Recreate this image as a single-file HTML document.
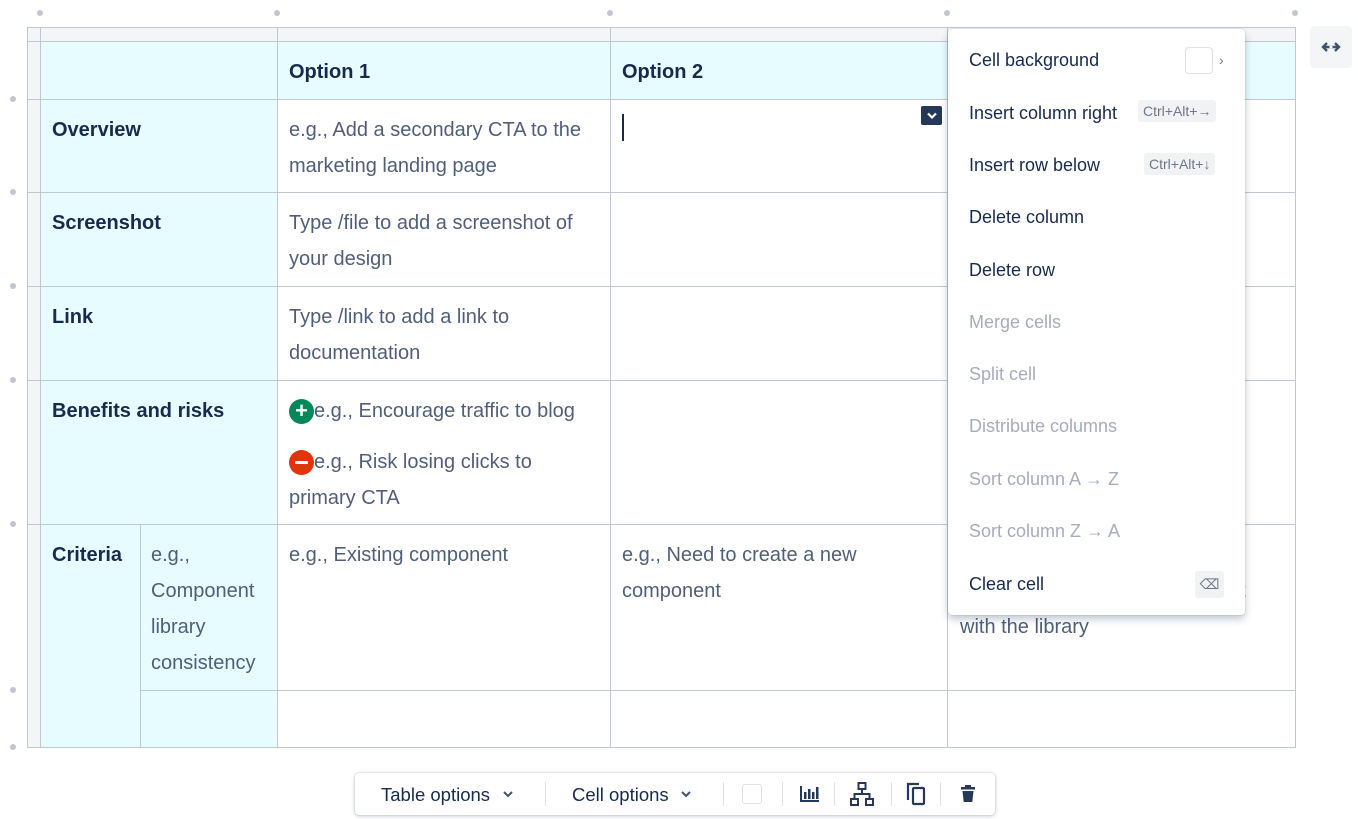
<!DOCTYPE html>
<html><head><meta charset="utf-8"><style>
*{margin:0;padding:0;box-sizing:border-box}
body{width:1358px;height:819px;background:#fff;position:relative;overflow:hidden;font-family:"Segoe UI","Liberation Sans",sans-serif;}
.a{position:absolute}
.dot{position:absolute;width:6px;height:6px;border-radius:50%;background:#c1c7d0}
.hl{position:absolute;height:1px;background:#c1c7d0}
.vl{position:absolute;width:1px;background:#c1c7d0}
.t{position:absolute;font-size:20px;line-height:36px;color:#505f79}
.b{position:absolute;font-size:20px;line-height:36px;color:#172b4d;font-weight:bold}
.mi{position:absolute;left:969px;font-size:18px;color:#172b4d}
.mi.d{color:#a5adba}
.kb{position:absolute;background:#f1f2f4;border-radius:3px;font-size:14px;color:#6b778c;padding:3px 5px}
</style></head><body>
<div class="dot" style="left:37px;top:10px"></div>
<div class="dot" style="left:274px;top:10px"></div>
<div class="dot" style="left:607px;top:10px"></div>
<div class="dot" style="left:944px;top:10px"></div>
<div class="dot" style="left:1292px;top:10px"></div>
<div class="dot" style="left:10px;top:96px"></div>
<div class="dot" style="left:10px;top:189px"></div>
<div class="dot" style="left:10px;top:283px"></div>
<div class="dot" style="left:10px;top:377px"></div>
<div class="dot" style="left:10px;top:521px"></div>
<div class="dot" style="left:10px;top:687px"></div>
<div class="dot" style="left:10px;top:744px"></div>

<div class="a" style="left:27px;top:27px;width:1269px;height:14px;background:#f4f5f7;border-radius:3px 3px 0 0"></div>
<div class="a" style="left:27px;top:27px;width:13px;height:720px;background:#f4f5f7"></div>
<div class="a" style="left:40px;top:41px;width:1256px;height:58px;background:#e6fcff"></div>
<div class="a" style="left:40px;top:99px;width:238px;height:648px;background:#e6fcff"></div>

<div class="hl" style="left:27px;top:27px;width:1269px"></div>
<div class="hl" style="left:27px;top:41px;width:1269px"></div>
<div class="hl" style="left:27px;top:99px;width:1269px"></div>
<div class="hl" style="left:27px;top:192px;width:1269px"></div>
<div class="hl" style="left:27px;top:286px;width:1269px"></div>
<div class="hl" style="left:27px;top:380px;width:1269px"></div>
<div class="hl" style="left:27px;top:524px;width:1269px"></div>
<div class="hl" style="left:140px;top:690px;width:1156px"></div>
<div class="hl" style="left:27px;top:747px;width:1269px"></div>
<div class="vl" style="left:27px;top:27px;height:721px"></div>
<div class="vl" style="left:40px;top:27px;height:721px"></div>
<div class="vl" style="left:140px;top:524px;height:224px"></div>
<div class="vl" style="left:277px;top:27px;height:721px"></div>
<div class="vl" style="left:610px;top:27px;height:721px"></div>
<div class="vl" style="left:947px;top:27px;height:721px"></div>
<div class="vl" style="left:1295px;top:27px;height:721px"></div>

<div class="b" style="left:289px;top:54px">Option 1</div>
<div class="b" style="left:622px;top:54px">Option 2</div>
<div class="b" style="left:52px;top:112px">Overview</div>
<div class="b" style="left:52px;top:205px">Screenshot</div>
<div class="b" style="left:52px;top:299px">Link</div>
<div class="b" style="left:52px;top:393px">Benefits and risks</div>
<div class="b" style="left:52px;top:537px">Criteria</div>
<div class="t" style="left:289px;top:112px">e.g., Add a secondary CTA to the<br>marketing landing page</div>
<div class="t" style="left:289px;top:205px">Type /file to add a screenshot of<br>your design</div>
<div class="t" style="left:289px;top:299px">Type /link to add a link to<br>documentation</div>
<div class="t" style="left:314px;top:393px">e.g., Encourage traffic to blog</div>
<div class="t" style="left:289px;top:444px;text-indent:25px;width:300px">e.g., Risk losing clicks to primary CTA</div>
<div class="a" style="left:289px;top:399px;width:25px;height:25px;border-radius:50%;background:#00875a;color:#fff;font-weight:bold;font-size:22px;line-height:24px;text-align:center">+</div>
<div class="a" style="left:289px;top:450px;width:25px;height:25px;border-radius:50%;background:#de350b"><div class="a" style="left:6px;top:11px;width:13px;height:3px;background:#fff;border-radius:1px"></div></div>
<div class="t" style="left:151px;top:537px">e.g.,<br>Component<br>library<br>consistency</div>
<div class="t" style="left:289px;top:537px">e.g., Existing component</div>
<div class="t" style="left:622px;top:537px">e.g., Need to create a new<br>component</div>
<div class="t" style="left:1240px;top:573px">t</div>
<div class="t" style="left:960px;top:609px">with the library</div>
<div class="a" style="left:622px;top:114px;width:2px;height:27px;background:#172b4d"></div>
<div class="a" style="left:921px;top:106px;width:21px;height:19px;background:#253858;border-radius:2px">
<svg width="12" height="8" viewBox="0 0 12 8" style="margin-top:6px;display:block;margin-left:4.5px"><path d="M2 1.5 L6 5.5 L10 1.5" stroke="#fff" stroke-width="2.2" fill="none"/></svg></div>

<div class="a" style="left:1310px;top:26px;width:42px;height:42px;background:#f4f5f7;border-radius:4px">
<svg width="42" height="42"><path d="M13 21 H29 M17 17 L13 21 L17 25 M25 17 L29 21 L25 25" stroke="#42526e" stroke-width="2.4" fill="none"/><rect x="19.5" y="19.8" width="3" height="2.4" fill="#f4f5f7"/></svg></div>

<div class="a" style="left:948px;top:29px;width:297px;height:586px;background:#fff;border-radius:4px;box-shadow:0 4px 8px rgba(9,30,66,.25),0 0 1px rgba(9,30,66,.31)"></div>
<div class="mi" style="top:50px">Cell background</div>
<div class="a" style="left:1185px;top:47px;width:28px;height:27px;border:1px solid #dfe1e6;border-radius:4px"></div>
<div class="a" style="left:1219px;top:52px;font-size:14px;color:#6b778c">›</div>
<div class="mi" style="top:103px">Insert column right</div>
<div class="kb" style="left:1138px;top:100px">Ctrl+Alt+→</div>
<div class="mi" style="top:155px">Insert row below</div>
<div class="kb" style="left:1144px;top:153px">Ctrl+Alt+↓</div>
<div class="mi" style="top:207px">Delete column</div>
<div class="mi" style="top:260px">Delete row</div>
<div class="mi d" style="top:312px">Merge cells</div>
<div class="mi d" style="top:364px">Split cell</div>
<div class="mi d" style="top:416px">Distribute columns</div>
<div class="mi d" style="top:469px">Sort column A → Z</div>
<div class="mi d" style="top:521px">Sort column Z → A</div>
<div class="mi" style="top:574px">Clear cell</div>
<div class="a" style="left:1195px;top:571px;width:29px;height:27px;background:#f1f2f4;border-radius:3px;text-align:center;line-height:27px;color:#6b778c;font-size:14px">⌫</div>

<div class="a" style="left:355px;top:773px;width:640px;height:42px;background:#fff;border-radius:4px;box-shadow:0 1px 4px rgba(9,30,66,.25),0 0 1px rgba(9,30,66,.3)"></div>
<div class="a" style="left:381px;top:784px;font-size:18.5px;color:#172b4d">Table options</div>
<svg class="a" style="left:502px;top:790px" width="12" height="8"><path d="M2 2 L6 6 L10 2" stroke="#42526e" stroke-width="2" fill="none"/></svg>
<div class="a" style="left:545px;top:782px;width:1px;height:24px;background:#dfe1e6"></div>
<div class="a" style="left:572px;top:784px;font-size:18.5px;color:#172b4d">Cell options</div>
<svg class="a" style="left:680px;top:790px" width="12" height="8"><path d="M2 2 L6 6 L10 2" stroke="#42526e" stroke-width="2" fill="none"/></svg>
<div class="a" style="left:723px;top:782px;width:1px;height:24px;background:#dfe1e6"></div>
<div class="a" style="left:742px;top:784px;width:20px;height:20px;border:1px solid #dfe1e6;border-radius:3px"></div>
<div class="a" style="left:782px;top:782px;width:1px;height:24px;background:#dfe1e6"></div>
<svg class="a" style="left:799px;top:784px" width="22" height="20"><path d="M2 2 V17 H20" stroke="#253858" stroke-width="2" fill="none"/><rect x="5" y="8" width="2.5" height="7" fill="#253858"/><rect x="9" y="5" width="2.5" height="10" fill="#253858"/><rect x="13" y="8" width="2.5" height="7" fill="#253858"/><rect x="17" y="3" width="2.5" height="12" fill="#253858"/></svg>
<div class="a" style="left:834px;top:782px;width:1px;height:24px;background:#dfe1e6"></div>
<svg class="a" style="left:849px;top:781px" width="26" height="26"><rect x="9.5" y="2" width="7" height="6" stroke="#253858" stroke-width="2" fill="none"/><rect x="2" y="18" width="7" height="6" stroke="#253858" stroke-width="2" fill="none"/><rect x="17" y="18" width="7" height="6" stroke="#253858" stroke-width="2" fill="none"/><path d="M13 8 V13 M5.5 18 V13 H20.5 V18" stroke="#253858" stroke-width="2" fill="none"/></svg>
<div class="a" style="left:891px;top:782px;width:1px;height:24px;background:#dfe1e6"></div>
<svg class="a" style="left:905px;top:781px" width="24" height="26"><path d="M3 19 V3 H14" stroke="#253858" stroke-width="2.2" fill="none"/><rect x="8" y="7" width="11" height="16" rx="1" stroke="#253858" stroke-width="2.2" fill="none"/></svg>
<div class="a" style="left:940px;top:782px;width:1px;height:24px;background:#dfe1e6"></div>
<svg class="a" style="left:959px;top:784px" width="18" height="20"><rect x="2" y="3" width="14" height="2.5" fill="#253858"/><rect x="6" y="1" width="6" height="2" fill="#253858"/><path d="M3.5 7 H14.5 L13.3 18 H4.7 Z" fill="#253858"/></svg>
</body></html>
